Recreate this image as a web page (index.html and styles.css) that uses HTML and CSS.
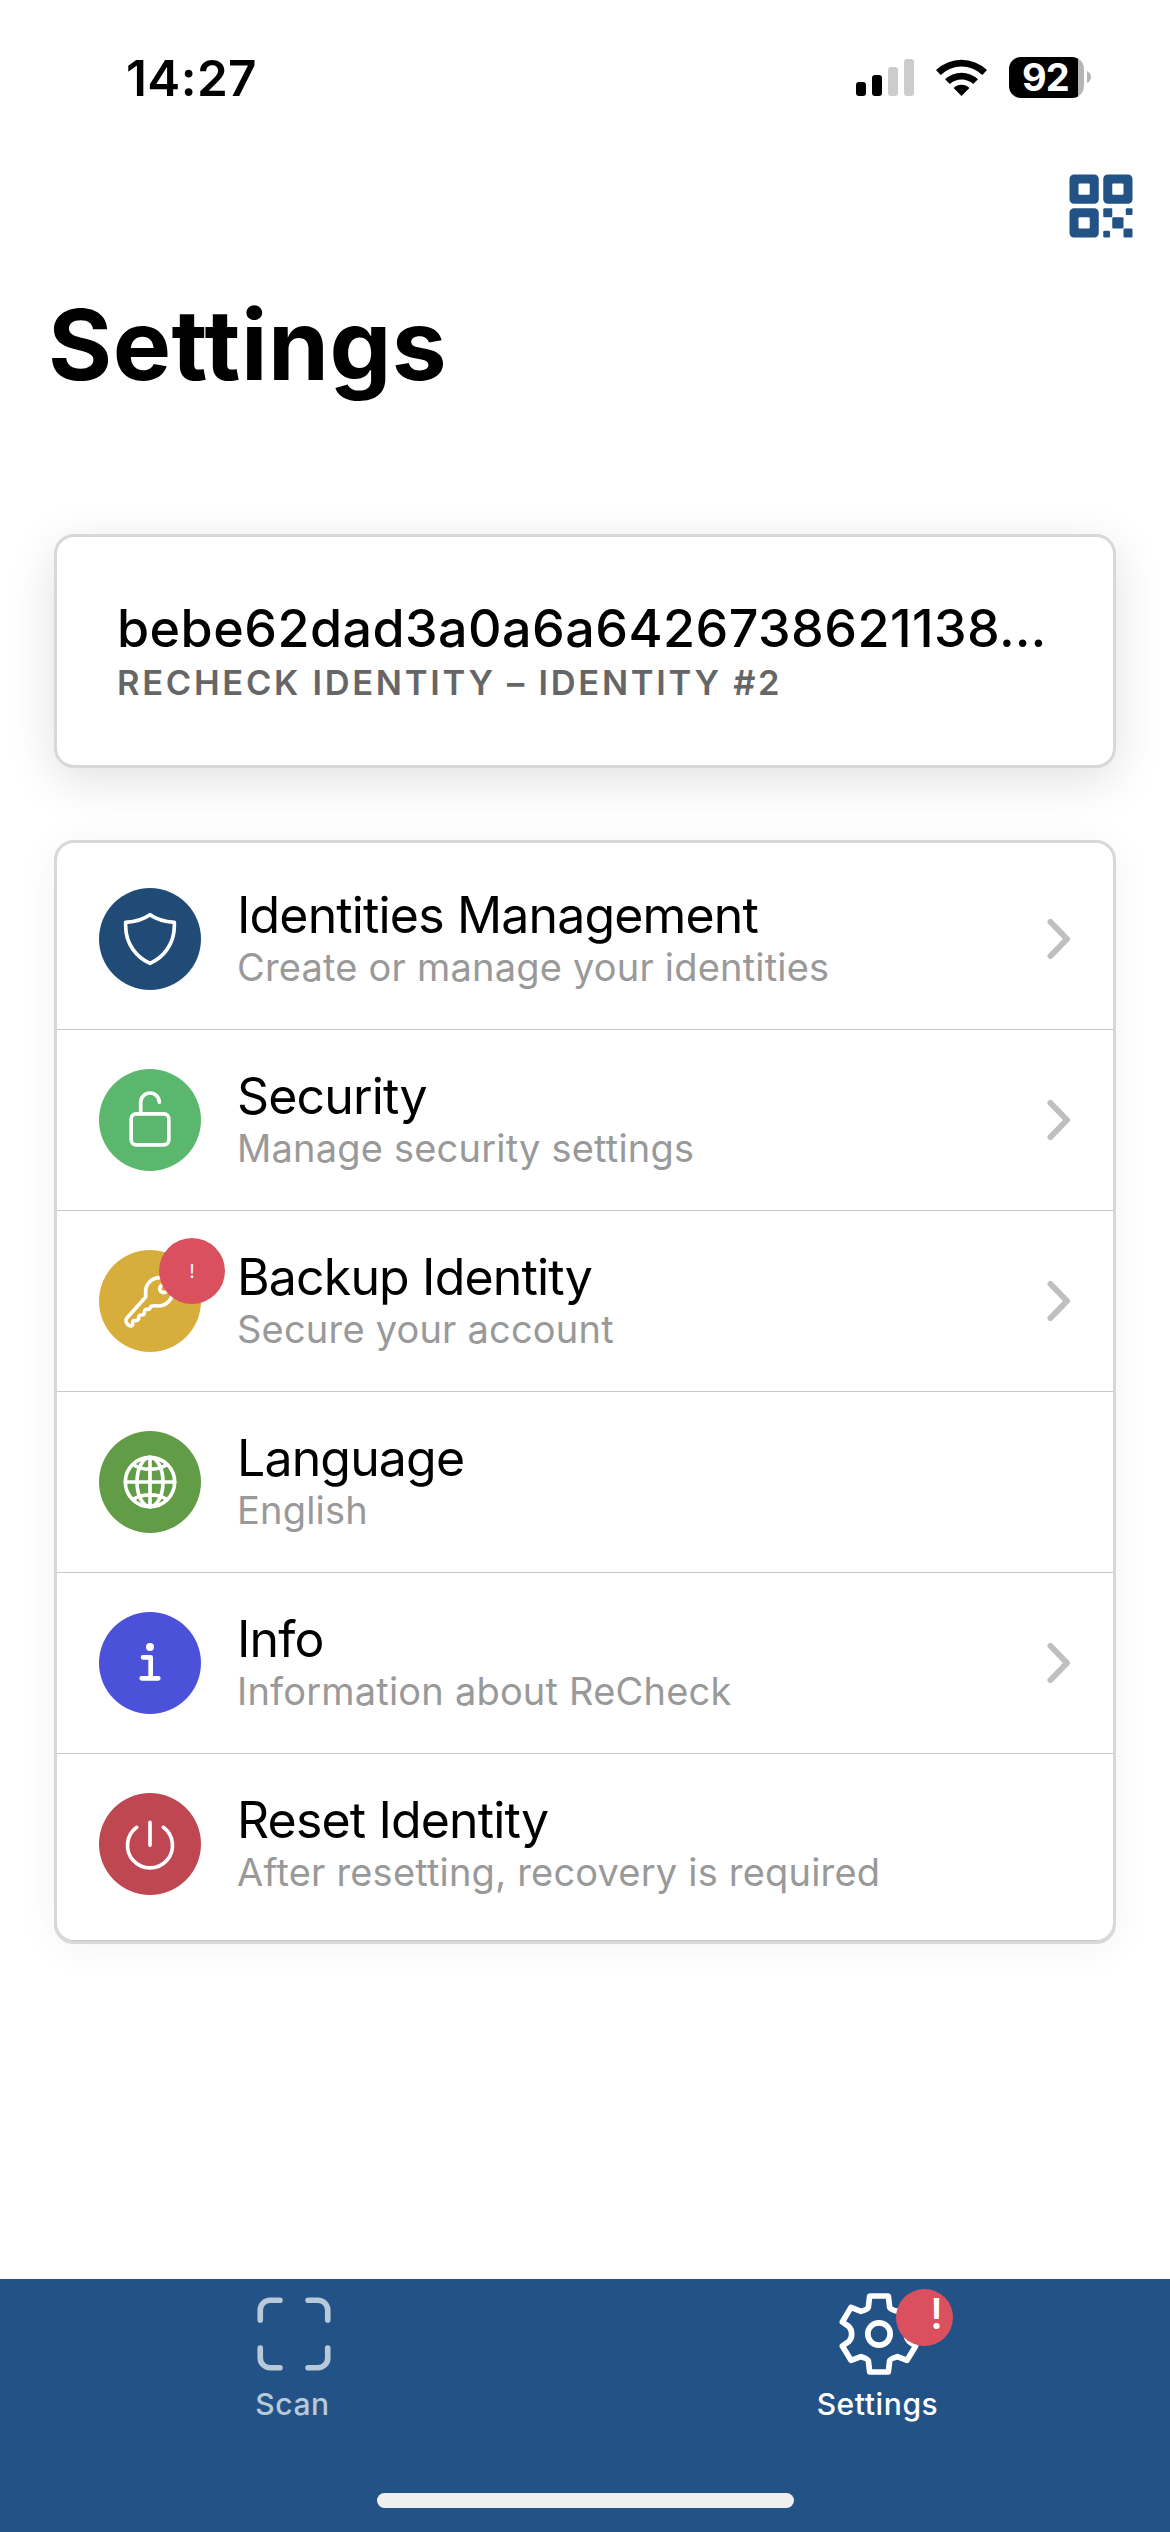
FILE: index.html
```html
<!DOCTYPE html>
<html lang="en">
<head>
    <meta charset="UTF-8">
    <title>Settings</title>
    <link rel="stylesheet" href="styles.css">
</head>
<body>
    <div class="status-bar">
        <span class="time">14:27</span>
        <div class="status-icons">
            <svg class="signal" width="58" height="37" viewBox="0 0 58 37">
                <rect x="0" y="23" width="10" height="14" rx="3"/>
                <rect x="16" y="16" width="10" height="21" rx="3"/>
                <rect class="dim" x="32" y="8" width="10" height="29" rx="3"/>
                <rect class="dim" x="48" y="0" width="10" height="37" rx="3"/>
            </svg>
            <svg class="wifi" width="51" height="37" viewBox="0 0 51 37">
                <path d="M0 11 A37 37 0 0 1 51 11 L46.3 16 A30 30 0 0 0 4.7 16Z"/>
                <path d="M9 20.3 A24 24 0 0 1 42 20.3 L37.2 25 A17.2 17.2 0 0 0 13.8 25Z"/>
                <path d="M17.6 29 A11.5 11.5 0 0 1 33.4 29 L25.5 37Z"/>
            </svg>
            <div class="battery">92</div>
            <svg class="battery-tip" width="4" height="12" viewBox="0 0 4 12"><path d="M0 0 Q4 2 4 6 T0 12Z"/></svg>
        </div>
    </div>

    <div class="toolbar">
        <svg class="qr" viewBox="0 0 512 512">
            <path fill-rule="evenodd" d="M64 32H208a32 32 0 0 1 32 32V208a32 32 0 0 1-32 32H64a32 32 0 0 1-32-32V64a32 32 0 0 1 32-32ZM104 96a8 8 0 0 0-8 8v64a8 8 0 0 0 8 8h64a8 8 0 0 0 8-8v-64a8 8 0 0 0-8-8Z"/>
            <path fill-rule="evenodd" d="M304 32H448a32 32 0 0 1 32 32V208a32 32 0 0 1-32 32H304a32 32 0 0 1-32-32V64a32 32 0 0 1 32-32ZM344 96a8 8 0 0 0-8 8v64a8 8 0 0 0 8 8h64a8 8 0 0 0 8-8v-64a8 8 0 0 0-8-8Z"/>
            <path fill-rule="evenodd" d="M64 272H208a32 32 0 0 1 32 32V448a32 32 0 0 1-32 32H64a32 32 0 0 1-32-32V304a32 32 0 0 1 32-32ZM104 336a8 8 0 0 0-8 8v64a8 8 0 0 0 8 8h64a8 8 0 0 0 8-8v-64a8 8 0 0 0-8-8Z"/>
            <rect x="336" y="336" width="80" height="80" rx="8"/>
            <rect x="272" y="272" width="64" height="64" rx="8"/>
            <rect x="416" y="416" width="64" height="64" rx="8"/>
            <rect x="432" y="272" width="48" height="48" rx="8"/>
            <rect x="272" y="432" width="48" height="48" rx="8"/>
        </svg>
    </div>

    <h1>Settings</h1>

    <div class="card identity">
        <div class="identity-hash">bebe62dad3a0a6a6426738621138…</div>
        <div class="identity-name">RECHECK IDENTITY – IDENTITY #2</div>
    </div>

    <div class="card list">
        <div class="item">
            <div class="icon navy">
                <svg viewBox="0 0 306 306"><path d="M153 80C135 93 106 101 80 103V114C80 170 115 210 153 226C191 210 226 170 226 114V103C200 101 171 93 153 80Z"/></svg>
            </div>
            <div class="label"><h2>Identities Management</h2><p>Create or manage your identities</p></div>
            <svg class="chevron" viewBox="0 0 24 42"><path d="M3.5 4L20 21L3.5 38"/></svg>
        </div>
        <div class="item">
            <div class="icon green">
                <svg viewBox="0 0 306 306"><rect x="96.500" y="134.500" width="113" height="93" rx="15"/><path d="M125 134V100a28 28 0 0 1 56 0"/></svg>
            </div>
            <div class="label"><h2>Security</h2><p>Manage security settings</p></div>
            <svg class="chevron" viewBox="0 0 24 42"><path d="M3.5 4L20 21L3.5 38"/></svg>
        </div>
        <div class="item">
            <div class="icon yellow">
                <svg viewBox="0 0 306 306"><path d="M140 141L82 206Q79 211 82 218Q88 228 96 228Q102 226 101 218Q101 211 108 212Q119 213 119 203Q119 194 128 195Q137 195 136 186Q137 176 146 178Q152 179 156 169Q168 166 177 168A46 46 0 0 0 222 118A40 40 0 0 0 182 83A42 42 0 0 0 140 125Z"/><circle cx="194" cy="116" r="12"/></svg>
                <span class="badge">!</span>
            </div>
            <div class="label"><h2>Backup Identity</h2><p>Secure your account</p></div>
            <svg class="chevron" viewBox="0 0 24 42"><path d="M3.5 4L20 21L3.5 38"/></svg>
        </div>
        <div class="item">
            <div class="icon olive">
                <svg viewBox="0 0 306 306"><circle cx="153" cy="153" r="74"/><ellipse cx="153" cy="153" rx="39" ry="74"/><path d="M153 79V227M79 153H227M103 101C130 119 176 119 203 101M103 205C130 187 176 187 203 205"/></svg>
            </div>
            <div class="label"><h2>Language</h2><p>English</p></div>
        </div>
        <div class="item">
            <div class="icon indigo">
                <svg viewBox="0 0 306 306"><circle class="dot" cx="153" cy="105" r="12"/><path class="thick" d="M132 136H155V199M128 199H178"/></svg>
            </div>
            <div class="label"><h2>Info</h2><p>Information about ReCheck</p></div>
            <svg class="chevron" viewBox="0 0 24 42"><path d="M3.5 4L20 21L3.5 38"/></svg>
        </div>
        <div class="item">
            <div class="icon red">
                <svg viewBox="0 0 306 306"><path d="M153 88V157M113 103A67.500 67.500 0 1 0 193 103"/></svg>
            </div>
            <div class="label"><h2>Reset Identity</h2><p>After resetting, recovery is required</p></div>
        </div>
    </div>

    <div class="tab-bar">
        <div class="tab">
            <svg class="tab-icon" viewBox="0 0 512 512"><path d="M336 448h56a56 56 0 0 0 56-56v-56M448 176v-56a56 56 0 0 0-56-56h-56M176 448h-56a56 56 0 0 1-56-56v-56M64 176v-56a56 56 0 0 1 56-56h56"/></svg>
            <span>Scan</span>
        </div>
        <div class="tab active">
            <svg class="tab-icon gear" viewBox="-135 -135 270 270"><path d="M-28-114H28L32-80Q34-74 55-68L84-80L110-36L90-22Q82-14 82 0Q82 14 90 22L110 36L84 79L55 68Q34 74 32 80L28 114H-28L-32 80Q-34 74-54 68L-84 79L-110 36L-90 22Q-82 14-82 0Q-82-14-90-22L-110-36L-84-80L-54-68Q-34-74-32-80Z"/><circle r="33.500"/></svg>
            <span>Settings</span>
            <span class="tab-badge">!</span>
        </div>
        <div class="home-indicator"></div>
    </div>
</body>
</html>
```
FILE: styles.css
```css
* {
    box-sizing: border-box;
}
body {
    margin: 0;
    width: 1170px;
    height: 2532px;
    background: #fff;
    font-family: Inter, "Liberation Sans", sans-serif;
    color: #000;
    display: flex;
    flex-direction: column;
    overflow: hidden;
}
h1, h2, p {
    margin: 0;
}

/* status bar */
.status-bar {
    height: 141px;
    padding: 48px 79px 0 126px;
    display: flex;
    justify-content: space-between;
    align-items: flex-start;
}
.time {
    font-size: 49.5px;
    line-height: 60px;
    font-weight: 600;
    letter-spacing: 0.4px;
}
.status-icons {
    display: flex;
    align-items: flex-start;
    padding-top: 9px;
}
.signal, .wifi {
    margin-top: 2px;
}
.signal {
    margin-right: 22px;
}
.dim {
    fill: #ccc;
}
.battery {
    margin-left: 22px;
    width: 75px;
    height: 41px;
    border-radius: 12px;
    background: linear-gradient(to right, #000 69px, #b5b5b5 69px);
    color: #fff;
    font-size: 38px;
    line-height: 41px;
    font-weight: 700;
    letter-spacing: -1px;
    padding-left: 13px;
}
.battery-tip {
    margin: 14px 0 0 3px;
    fill: #b5b5b5;
}

.toolbar {
    height: 140px;
    padding: 29px 33px 0 0;
    display: flex;
    justify-content: flex-end;
}
.qr {
    width: 72px;
    height: 72px;
    fill: #235386;
}
h1 {
    padding-left: 48px;
    font-size: 98px;
    line-height: 120px;
    font-weight: 700;
    letter-spacing: 0.5px;
    height: 253px;
    padding-top: 4px;
}

/* cards */
.card {
    margin: 0 54px;
    border: 3px solid #d8d8d8;
    border-radius: 20px;
    background: #fff;
}
.identity {
    height: 234px;
    padding: 60px 60px 0;
    box-shadow: 0 12px 48px rgba(0, 0, 0, 0.12);
}
.identity-hash {
    font-size: 52px;
    line-height: 64px;
    font-weight: 500;
    letter-spacing: 0.45px;
    white-space: nowrap;
}
.identity-name {
    font-size: 34.5px;
    line-height: 44px;
    font-weight: 600;
    letter-spacing: 2.7px;
    color: #666;
}
.list {
    margin-top: 72px;
    padding: 6px 0;
    box-shadow: 0 4px 40px rgba(0, 0, 0, 0.05), inset 0 -1px #c8c8cc;
}
.item {
    height: 181px;
    padding: 0 42px;
    display: flex;
    align-items: center;
    border-bottom: 1px solid #c8c8cc;
}
.item:last-child {
    border-bottom-color: transparent;
}
.icon {
    position: relative;
    width: 102px;
    height: 102px;
    border-radius: 50%;
}
.icon svg {
    display: block;
    width: 102px;
    height: 102px;
    fill: none;
    stroke: #fff;
    stroke-width: 11;
    stroke-linecap: round;
    stroke-linejoin: round;
}
.icon .dot {
    fill: #fff;
    stroke: none;
}
.icon .thick {
    stroke-width: 14;
}
.navy { background: #204b76; }
.green { background: #5cb76e; }
.yellow { background: #d7ae3b; }
.olive { background: #629c46; }
.indigo { background: #4b51d8; }
.red { background: #bf4751; }
.badge {
    position: absolute;
    left: 60px;
    top: -12px;
    width: 66px;
    height: 66px;
    border-radius: 50%;
    background: #da505f;
    color: #fff;
    font-size: 19px;
    line-height: 68px;
    text-align: center;
}
.label {
    flex: 1;
    margin-left: 36px;
    padding-bottom: 2px;
}
.label h2 {
    font-size: 50px;
    line-height: 58px;
    font-weight: 400;
    letter-spacing: -0.85px;
}
.label p {
    font-size: 38px;
    line-height: 46px;
    letter-spacing: 0.2px;
    color: #999;
}
.chevron {
    width: 24px;
    height: 42px;
    fill: none;
    stroke: #bfbfbf;
    stroke-width: 6;
    stroke-linecap: round;
    stroke-linejoin: round;
}

/* bottom tabs */
.tab-bar {
    position: relative;
    margin-top: auto;
    height: 253px;
    background: #235386;
    display: flex;
}
.tab {
    position: relative;
    flex: 1;
    padding-top: 10px;
    display: flex;
    flex-direction: column;
    align-items: center;
    color: #b8cada;
    font-size: 30px;
    line-height: 36px;
    font-weight: 500;
    letter-spacing: 0.6px;
}
.tab-icon {
    width: 90px;
    height: 90px;
    margin: 0 0 7px 2px;
    fill: none;
    stroke: currentColor;
    stroke-width: 32;
    stroke-linecap: round;
    stroke-linejoin: round;
}
.gear {
    stroke-width: 17;
}
.active {
    color: #fff;
}
.tab-badge {
    position: absolute;
    left: 311px;
    top: 10px;
    width: 57px;
    height: 57px;
    border-radius: 50%;
    background: #da505f;
    font-size: 43px;
    line-height: 49px;
    padding-left: 34px;
}
.home-indicator {
    position: absolute;
    left: 377px;
    top: 214px;
    width: 417px;
    height: 15px;
    border-radius: 8px;
    background: #efefef;
}
```
